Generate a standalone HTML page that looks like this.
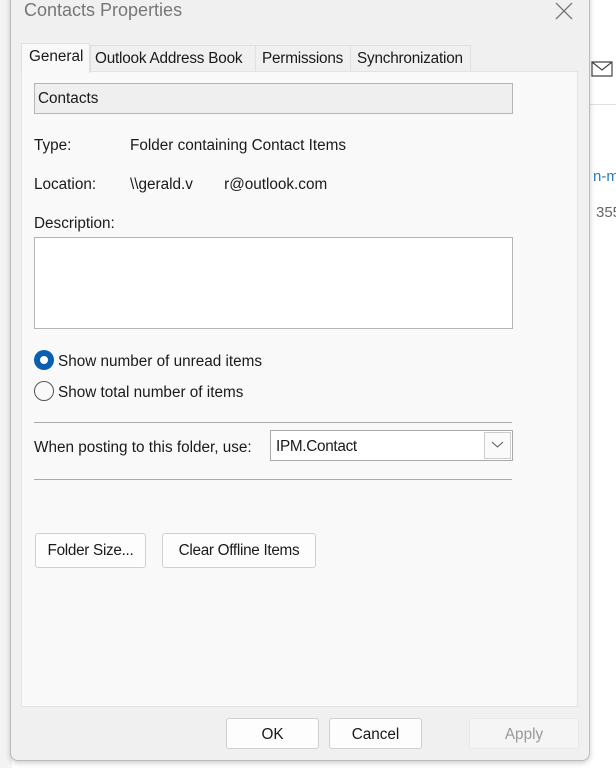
<!DOCTYPE html>
<html><head><style>
*{box-sizing:border-box;margin:0;padding:0}
body{width:616px;height:768px;overflow:hidden;background:#fff;font-family:"Liberation Sans",sans-serif;font-size:15.3px;color:#1a1a1a;position:relative}
.a{position:absolute}
.t{position:absolute;white-space:nowrap}
.btn{position:absolute;background:#fdfdfd;border:1px solid #d0d0d0;border-radius:3px;text-align:center}
</style></head><body>
<div class="a" style="left:0;top:0;width:12px;height:768px;background:#f3f3f3"></div>
<div class="a" style="left:590px;top:0;width:26px;height:768px;background:#fff"></div>
<div class="a" style="left:590px;top:104px;width:26px;height:1px;background:#e0e0e0"></div>
<div class="t" style="left:593px;top:168px;color:#2b7ab5;font-size:15px">n-m</div>
<div class="t" style="left:596px;top:204px;color:#666;font-size:15px">355</div>
<svg class="a" style="left:591px;top:60px" width="22" height="18"><path d="M1 2h20v14H1zM1 2l10 8 10-8" fill="none" stroke="#444" stroke-width="1.2"/></svg>
<div class="a" style="left:10px;top:-10px;width:580px;height:771px;background:#f0f0f0;border:1px solid #bbb;border-radius:8px;box-shadow:0 2px 6px rgba(0,0,0,.2)"></div>
<div class="t" style="left:24px;top:0px;font-size:18px;color:#777">Contacts Properties</div>
<svg class="a" style="left:555px;top:2px" width="18" height="18"><path d="M1 1L17 17M17 1L1 17" stroke="#777" stroke-width="1.3"/></svg>
<div class="a" style="left:21px;top:71px;width:557px;height:636px;background:#f9f9f9;border:1px solid #e3e3e3"></div>
<div class="a" style="left:21px;top:43px;width:69px;height:30px;background:#f9f9f9;border:1px solid #e0e0e0;border-bottom:none"></div>
<div class="t" style="left:29px;top:48px">General</div>
<div class="a" style="left:90px;top:45px;width:381px;height:26px;background:#f0f0f0;border:1px solid #e0e0e0;border-bottom:none"></div>
<div class="a" style="left:255px;top:45px;width:1px;height:26px;background:#e0e0e0"></div>
<div class="a" style="left:350px;top:45px;width:1px;height:26px;background:#e0e0e0"></div>
<div class="t" style="left:95px;top:50px;letter-spacing:-0.2px">Outlook Address Book</div>
<div class="t" style="left:262px;top:50px;letter-spacing:-0.2px">Permissions</div>
<div class="t" style="left:357px;top:50px;letter-spacing:-0.2px">Synchronization</div>
<div class="a" style="left:34px;top:83px;width:479px;height:31px;background:#efefef;border:1px solid #b5b5b5"></div>
<div class="t" style="left:38px;top:90px">Contacts</div>
<div class="t" style="left:34px;top:137px">Type:</div>
<div class="t" style="left:130px;top:137px">Folder containing Contact Items</div>
<div class="t" style="left:34px;top:176px">Location:</div>
<div class="t" style="left:130px;top:176px">\\gerald.v<span style="color:#f9f9f9">.wag</span>r@outlook.com</div>
<div class="t" style="left:34px;top:215px">Description:</div>
<div class="a" style="left:34px;top:237px;width:479px;height:92px;background:#fff;border:1px solid #b5b5b5"></div>
<div class="a" style="left:34px;top:350px;width:20px;height:20px;border-radius:50%;background:#0a5fb0"></div>
<div class="a" style="left:40px;top:356px;width:8px;height:8px;border-radius:50%;background:#fff"></div>
<div class="t" style="left:58px;top:353px">Show number of unread items</div>
<div class="a" style="left:34px;top:381px;width:20px;height:20px;border-radius:50%;border:1px solid #555;background:#f9f9f9"></div>
<div class="t" style="left:58px;top:384px">Show total number of items</div>
<div class="a" style="left:34px;top:422px;width:478px;height:1px;background:#aaa"></div>
<div class="t" style="left:34px;top:439px">When posting to this folder, use:</div>
<div class="a" style="left:270px;top:430px;width:243px;height:31px;background:#fff;border:1px solid #aaa"></div>
<div class="a" style="left:484px;top:432px;width:27px;height:27px;border:1px solid #ccc;background:#fafafa"></div>
<svg class="a" style="left:491px;top:440px" width="13" height="9"><path d="M1 2l5.5 5 5.5-5" fill="none" stroke="#555" stroke-width="1"/></svg>
<div class="t" style="left:276px;top:438px;letter-spacing:-0.3px">IPM.Contact</div>
<div class="a" style="left:34px;top:479px;width:478px;height:1px;background:#aaa"></div>
<div class="btn" style="left:35px;top:533px;width:111px;height:35px;line-height:34px;letter-spacing:-0.3px">Folder Size...</div>
<div class="btn" style="left:162px;top:533px;width:154px;height:35px;line-height:34px;letter-spacing:-0.3px">Clear Offline Items</div>
<div class="btn" style="left:226px;top:718px;width:93px;height:31px;line-height:31px">OK</div>
<div class="btn" style="left:329px;top:718px;width:93px;height:31px;line-height:31px">Cancel</div>
<div class="btn" style="left:469px;top:718px;width:110px;height:31px;line-height:31px;color:#999;background:#f5f5f5;border-color:#e8e8e8">Apply</div>
</body></html>
